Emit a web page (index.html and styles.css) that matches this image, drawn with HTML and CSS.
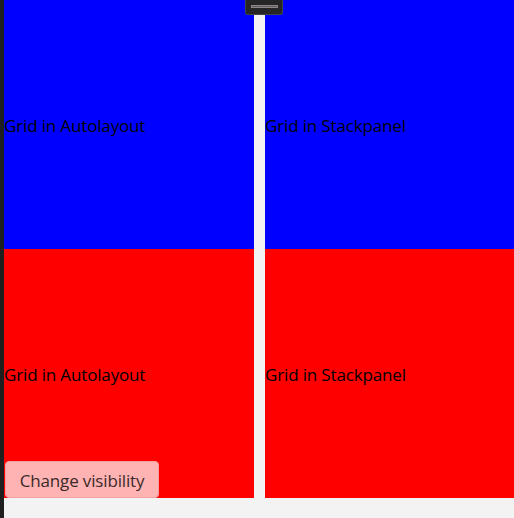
FILE: index.html
```html
<!DOCTYPE html>
<html>
<head>
<meta charset="utf-8">
<link rel="stylesheet" href="styles.css">
</head>
<body>
<div class="app">
  <div class="rail"></div>
  <div class="content">
    <div class="col col-left">
      <div class="cell blue"><span class="label">Grid in Autolayout</span></div>
      <div class="cell red"><span class="label">Grid in Autolayout</span>
        <button class="btn">Change visibility</button>
      </div>
    </div>
    <div class="col col-right">
      <div class="cell blue"><span class="label">Grid in Stackpanel</span></div>
      <div class="cell red"><span class="label">Grid in Stackpanel</span></div>
    </div>
  </div>
  <div class="handle"><div class="handle-bar"></div></div>
</div>
</body>
</html>
```
FILE: styles.css
```css
html, body {
  margin: 0;
  padding: 0;
  background: #f3f3f3;
  font-family: "Open Sans", "Noto Sans", sans-serif;
}
.app {
  position: relative;
  display: flex;
  width: 514px;
  height: 518px;
  overflow: hidden;
}
.rail {
  width: 4px;
  height: 518px;
  background: #1f1f1f;
  flex: none;
}
.content {
  display: flex;
  gap: 11px;
  align-items: flex-start;
}
.col {
  display: flex;
  flex-direction: column;
}
.col-left { width: 250px; }
.col-right { width: 249px; }
.cell {
  position: relative;
  height: 249px;
  display: flex;
  align-items: center;
}
.blue { background: #0000ff; }
.red { background: #ff0000; }
.label {
  font-size: 17px;
  color: #000;
  letter-spacing: -0.15px;
  line-height: 20px;
  margin-top: 3px;
}
.btn {
  position: absolute;
  left: 1px;
  bottom: 0;
  width: 154px;
  height: 37px;
  border: 1px solid #f0a0a0;
  border-radius: 4px;
  background: #ffb3b3;
  color: #3a2a2a;
  font-family: "Open Sans", "Noto Sans", sans-serif;
  font-size: 17px;
  letter-spacing: -0.15px;
  padding: 2px 0 0 0;
}
.handle {
  position: absolute;
  left: 245px;
  top: 0;
  width: 38px;
  height: 15px;
  background: #262626;
  border: 1px solid #444;
  border-top: none;
  box-sizing: border-box;
  border-radius: 0 0 3px 3px;
  display: flex;
  justify-content: center;
  padding-top: 5px;
}
.handle-bar {
  width: 27px;
  height: 3px;
  background: #6a5a5e;
  border: 1px solid #888;
  box-sizing: border-box;
}
```
